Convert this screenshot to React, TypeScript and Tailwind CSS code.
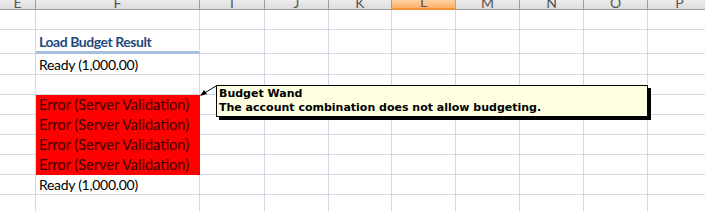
import React from "react";

const cols = [
  { key: "E", w: "w-[36px]" },
  { key: "F", w: "w-[164px]" },
  { key: "I", w: "w-[65px]" },
  { key: "J", w: "w-[64px]" },
  { key: "K", w: "w-[63px]" },
  { key: "L", w: "w-[64px]" },
  { key: "M", w: "w-[64px]" },
  { key: "N", w: "w-[64px]" },
  { key: "O", w: "w-[64px]" },
  { key: "P", w: "w-[64px]" },
];

type Row = { h: string; text?: string; kind?: "heading" | "error" | "plain" };

const rows: Row[] = [
  { h: "h-[20px]" },
  { h: "h-[24px]", text: "Load Budget Result", kind: "heading" },
  { h: "h-[21px]", text: "Ready (1,000.00)", kind: "plain" },
  { h: "h-[20px]" },
  { h: "h-[20px]", text: "Error (Server Validation)", kind: "error" },
  { h: "h-[20px]", text: "Error (Server Validation)", kind: "error" },
  { h: "h-[20px]", text: "Error (Server Validation)", kind: "error" },
  { h: "h-[20px]", text: "Error (Server Validation)", kind: "error" },
  { h: "h-[20px]", text: "Ready (1,000.00)", kind: "plain" },
  { h: "h-[20px]" },
];

function HeaderRow() {
  return (
    <div className="flex h-[10px] overflow-hidden">
      {cols.map((c) => (
        <div
          key={c.key}
          className={`${c.w} shrink-0 flex items-end justify-center border-r ${
            c.key === "L"
              ? "bg-gradient-to-b from-[#ffd2a4] to-[#ffae68] border-r-[#f29436] border-b-2 border-b-[#f29436]"
              : "bg-gradient-to-b from-[#ececec] to-[#dcdcdc] border-r-[#9e9e9e] border-b border-b-[#9e9e9e]"
          }`}
        >
          <span className="text-[14px] leading-[14px] -mb-[1px] text-[#555]">{c.key}</span>
        </div>
      ))}
    </div>
  );
}

function SheetRow({ row }: { row: Row }) {
  return (
    <div className={`flex ${row.h}`}>
      {cols.map((c) => {
        const isF = c.key === "F";
        let cls = "border-r border-b border-[#d0d7e5]";
        let content: React.ReactNode = null;
        if (isF && row.kind === "heading") {
          cls = "border-r border-[#d0d7e5] border-b-[3px] border-b-[#a7bfde]";
          content = (
            <span className="font-bold text-[14px] tracking-[-0.45px] text-[#1f497d]">{row.text}</span>
          );
        } else if (isF && row.kind === "error") {
          cls = "bg-[#ff0000] border-r border-b border-[#ff0000]";
          content = <span className="text-[14.5px] text-[#3a0000]">{row.text}</span>;
        } else if (isF && row.kind === "plain") {
          content = <span className="text-[14px] tracking-[-0.3px] text-black">{row.text}</span>;
        }
        return (
          <div
            key={c.key}
            className={`${c.w} shrink-0 flex items-end pl-[3px] pb-[1px] leading-[17px] whitespace-nowrap ${cls}`}
          >
            {content}
          </div>
        );
      })}
    </div>
  );
}

export default function App() {
  return (
    <div
      className="relative w-[705px] h-[211px] overflow-hidden bg-white"
      style={{ fontFamily: "Lato, 'Open Sans', sans-serif" }}
    >
      <HeaderRow />
      {rows.map((r, i) => (
        <SheetRow key={i} row={r} />
      ))}

      {/* comment arrow */}
      <svg className="absolute left-0 top-0" width="705" height="211">
        <line x1="216" y1="86" x2="203" y2="94" stroke="black" strokeWidth="1" />
        <polygon points="200,96 207,94 204,90" fill="black" />
      </svg>

      {/* comment box */}
      <div className="absolute left-[216px] top-[85px] w-[432px] h-[32px] bg-[#ffffe1] border border-black shadow-[3px_3px_0_0_#000] px-[2px] pt-[1px]">
        <div
          className="font-bold text-[11px] leading-[14px] text-black whitespace-nowrap"
          style={{ fontFamily: "'DejaVu Sans', Verdana, sans-serif" }}
        >
          <div>Budget Wand</div>
          <div>The account combination does not allow budgeting.</div>
        </div>
      </div>
    </div>
  );
}
